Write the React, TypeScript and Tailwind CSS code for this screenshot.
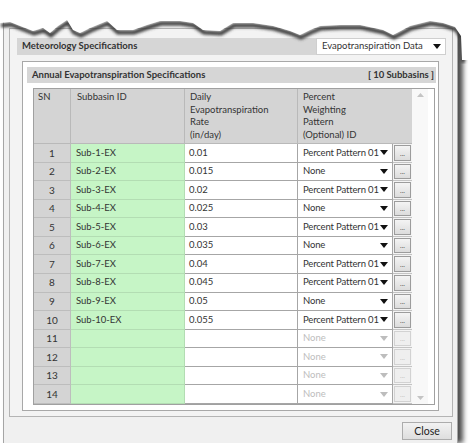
import React from "react";

type Row = { sn: number; id: string; rate: string; pattern: string; enabled: boolean };

const rows: Row[] = [
  { sn: 1, id: "Sub-1-EX", rate: "0.01", pattern: "Percent Pattern 01", enabled: true },
  { sn: 2, id: "Sub-2-EX", rate: "0.015", pattern: "None", enabled: true },
  { sn: 3, id: "Sub-3-EX", rate: "0.02", pattern: "Percent Pattern 01", enabled: true },
  { sn: 4, id: "Sub-4-EX", rate: "0.025", pattern: "None", enabled: true },
  { sn: 5, id: "Sub-5-EX", rate: "0.03", pattern: "Percent Pattern 01", enabled: true },
  { sn: 6, id: "Sub-6-EX", rate: "0.035", pattern: "None", enabled: true },
  { sn: 7, id: "Sub-7-EX", rate: "0.04", pattern: "Percent Pattern 01", enabled: true },
  { sn: 8, id: "Sub-8-EX", rate: "0.045", pattern: "Percent Pattern 01", enabled: true },
  { sn: 9, id: "Sub-9-EX", rate: "0.05", pattern: "None", enabled: true },
  { sn: 10, id: "Sub-10-EX", rate: "0.055", pattern: "Percent Pattern 01", enabled: true },
  { sn: 11, id: "", rate: "", pattern: "None", enabled: false },
  { sn: 12, id: "", rate: "", pattern: "None", enabled: false },
  { sn: 13, id: "", rate: "", pattern: "None", enabled: false },
  { sn: 14, id: "", rate: "", pattern: "None", enabled: false },
];

const Arrow = ({ color = "#111" }: { color?: string }) => (
  <svg width="8" height="5" viewBox="0 0 8 5" className="shrink-0">
    <path d="M0 0 L8 0 L4 5 Z" fill={color} />
  </svg>
);

// torn paper edge along the top of the window
const edge =
  "0,23 10,22 20,26 33,31 43,28 50,33 58,26 67,20 73,30 80,33 90,28 107,21 117,30 133,30 147,25 160,21 180,21 193,23 203,30 220,31 233,23 253,23 273,26 290,31 300,35 310,30 320,26 340,25 360,25 383,30 393,35 410,26 430,21 443,23 455,27 461,36 462,60";

const TornEdge = () => (
  <svg width="474" height="64" className="absolute left-0 top-0 pointer-events-none">
    <defs>
      <filter id="blur" x="-10%" y="-50%" width="120%" height="200%">
        <feGaussianBlur stdDeviation="1.6" />
      </filter>
    </defs>
    <polyline points={edge} fill="none" stroke="#3a3a3a" strokeWidth="4" transform="translate(1,2.5)" filter="url(#blur)" />
    <polygon points={`${edge} 474,60 474,0 0,0`} fill="#ffffff" />
  </svg>
);

export default function App() {
  return (
    <div className="relative w-[474px] h-[443px] overflow-hidden bg-white font-['Lato',sans-serif] text-[9.5px] leading-[12.5px] text-[#333] whitespace-nowrap">
      {/* window */}
      <div className="ml-[3px] w-[455px] h-full flex flex-col bg-[#f0f0f0] border-x border-[#a5a5a5] shadow-[5px_0_5px_rgba(0,0,0,0.7)] pt-[28px]">
        {/* panel */}
        <div className="ml-[5px] mr-[4px] border border-[#b4b4b4] bg-[#f3f3f3] pl-[7px] pr-[6px] pt-[9px] pb-[5px]">
          <div className="h-[17px] flex items-center justify-between bg-[#d6d6d6]">
            <span className="pl-[5px] font-bold text-[#333]">Meteorology Specifications</span>
            <div className="w-[130px] h-[17px] flex items-center justify-between bg-white border border-[#cfcfcf] pl-[5px] pr-[4px]">
              <span className="text-[#333]">Evapotranspiration Data</span>
              <Arrow />
            </div>
          </div>

          {/* group box */}
          <div className="mt-[6px] ml-[5px] mr-[7px] border border-[#a8a8a8] bg-white pt-[5px] pb-[5px]">
            <div className="ml-[4px] mr-[2px] h-[16px] flex items-center justify-between bg-[#d6d6d6] pl-[5px] pr-[2px]">
              <span className="font-bold">Annual Evapotranspiration Specifications</span>
              <span className="font-bold">[ 10 Subbasins ]</span>
            </div>

            <div className="mt-[5px] ml-[10px] mr-[3px] flex border border-[#a0a0a0]">
              <div className="grid grid-cols-[37px_114px_113px_95px_19px] grid-rows-[55px_repeat(14,18.57px)]">
                {/* header */}
                <div className="bg-[#d4d4d4] border-r border-b border-[#b9b9b9] pl-[4px] pt-[2px]">SN</div>
                <div className="bg-[#d4d4d4] border-r border-b border-[#b9b9b9] pl-[6px] pt-[2px]">Subbasin ID</div>
                <div className="bg-[#d4d4d4] border-r border-b border-[#b9b9b9] pl-[5px] pt-[2px]">
                  Daily
                  <br />
                  Evapotranspiration
                  <br />
                  Rate
                  <br />
                  (in/day)
                </div>
                <div className="col-span-2 bg-[#d4d4d4] border-b border-[#b9b9b9] pl-[5px] pt-[2px]">
                  Percent
                  <br />
                  Weighting
                  <br />
                  Pattern
                  <br />
                  (Optional) ID
                </div>

                {rows.map((r) => (
                  <React.Fragment key={r.sn}>
                    <div className="flex items-center justify-center bg-[#d4d4d4] border-r border-b border-[#bdbdbd] text-[10px]">
                      {r.sn}
                    </div>
                    <div className="flex items-center pl-[5px] bg-[#c6f5c6] border-r border-b border-[#b3ddb3]">
                      {r.id}
                    </div>
                    <div className="flex items-center pl-[4px] bg-white border-r border-b border-[#a6a6a6]">
                      {r.rate}
                    </div>
                    <div className="flex items-center justify-between pl-[5px] pr-[4px] bg-white border-r border-b border-[#a6a6a6]">
                      <span className={r.enabled ? "tracking-[-0.15px] text-[#333]" : "text-[#bdbdbd]"}>{r.pattern}</span>
                      <Arrow color={r.enabled ? "#111" : "#bdbdbd"} />
                    </div>
                    <div className="flex items-center justify-center bg-[#f4f4f4] border-b border-[#c4c4c4] px-[1px] py-[1px]">
                      <div
                        className={
                          r.enabled
                            ? "w-full h-full flex items-end justify-center pb-[3px] border border-[#9c9c9c] bg-gradient-to-b from-[#f4f4f4] to-[#dcdcdc] text-[7px] leading-[7px] text-[#555]"
                            : "w-full h-full flex items-end justify-center pb-[3px] border border-[#d2d2d2] bg-[#efefef] text-[7px] leading-[7px] text-[#c4c4c4]"
                        }
                      >
                        ...
                      </div>
                    </div>
                  </React.Fragment>
                ))}
              </div>

              {/* scrollbar */}
              <div className="w-[16px] flex flex-col items-center justify-between bg-[#f8f8f8] py-[4px]">
                <svg width="7" height="4" viewBox="0 0 7 4">
                  <path d="M0 4 L7 4 L3.5 0 Z" fill="#c4c4c4" />
                </svg>
                <svg width="7" height="4" viewBox="0 0 7 4">
                  <path d="M0 0 L7 0 L3.5 4 Z" fill="#c4c4c4" />
                </svg>
              </div>
            </div>
          </div>
        </div>

        {/* footer */}
        <div className="flex justify-end pt-[5px] pr-[5px]">
          <button className="w-[50px] h-[18px] border border-[#acacac] bg-gradient-to-b from-[#f2f2f2] to-[#dedede] text-[10.5px] leading-[16px] text-[#222]">
            Close
          </button>
        </div>
      </div>

      <TornEdge />
    </div>
  );
}
